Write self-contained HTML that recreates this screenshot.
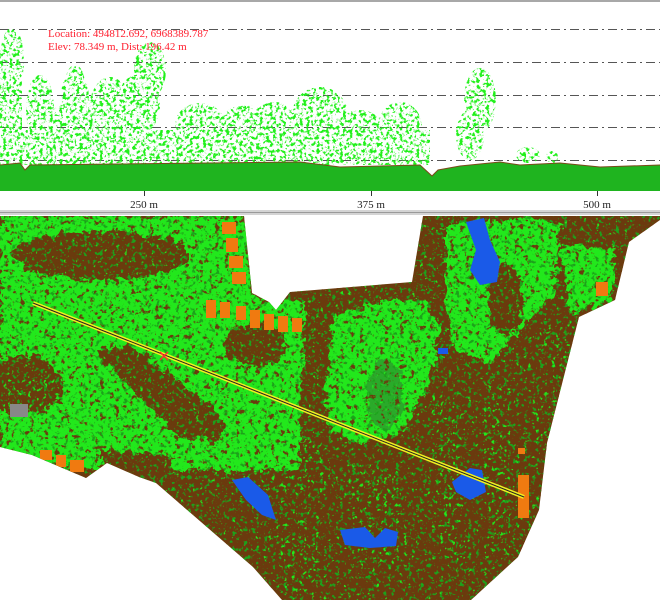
<!DOCTYPE html>
<html><head><meta charset="utf-8"><style>
html,body{margin:0;padding:0;background:#fff;}
svg{display:block;}
text{font-family:"Liberation Serif",serif;}
</style></head><body>
<svg width="660" height="600" viewBox="0 0 660 600" xmlns="http://www.w3.org/2000/svg">
<defs>
<filter id="spk" x="-10%" y="-10%" width="120%" height="120%">
<feTurbulence type="fractalNoise" baseFrequency="0.3" numOctaves="3" seed="4" result="n"/>
<feColorMatrix in="n" type="matrix" values="0 0 0 0 0 0 0 0 0 0 0 0 0 0 0 9 0 0 0 -4.6" result="m"/>
<feComposite in="SourceGraphic" in2="m" operator="in"/>
</filter>
<filter id="spk2" x="-10%" y="-10%" width="120%" height="120%">
<feTurbulence type="fractalNoise" baseFrequency="0.25" numOctaves="3" seed="9" result="n"/>
<feColorMatrix in="n" type="matrix" values="0 0 0 0 0 0 0 0 0 0 0 0 0 0 0 10 0 0 0 -6.3" result="m"/>
<feComposite in="SourceGraphic" in2="m" operator="in"/>
</filter>
<filter id="spk2b" x="-10%" y="-10%" width="120%" height="120%">
<feTurbulence type="fractalNoise" baseFrequency="0.25" numOctaves="3" seed="9" result="n"/>
<feColorMatrix in="n" type="matrix" values="0 0 0 0 0 0 0 0 0 0 0 0 0 0 0 10 0 0 0 -6.9" result="m"/>
<feComposite in="SourceGraphic" in2="m" operator="in"/>
</filter>
<filter id="spk3" x="-10%" y="-10%" width="120%" height="120%">
<feTurbulence type="fractalNoise" baseFrequency="0.2" numOctaves="3" seed="13" result="n"/>
<feColorMatrix in="n" type="matrix" values="0 0 0 0 0 0 0 0 0 0 0 0 0 0 0 10 0 0 0 -6.0" result="m"/>
<feComposite in="SourceGraphic" in2="m" operator="in"/>
</filter>
<filter id="spk4" x="-10%" y="-10%" width="120%" height="120%">
<feTurbulence type="fractalNoise" baseFrequency="0.25" numOctaves="3" seed="21" result="n"/>
<feColorMatrix in="n" type="matrix" values="0 0 0 0 0 0 0 0 0 0 0 0 0 0 0 10 0 0 0 -5.8" result="m"/>
<feComposite in="SourceGraphic" in2="m" operator="in"/>
</filter>
<filter id="rough" x="-10%" y="-10%" width="120%" height="120%">
<feTurbulence type="fractalNoise" baseFrequency="0.12" numOctaves="3" seed="2" result="t"/>
<feDisplacementMap in="SourceGraphic" in2="t" scale="14" xChannelSelector="R" yChannelSelector="G"/>
</filter>
<clipPath id="mapclip"><polygon points="0,216 244,216 252,293 269,302 276,310 290,292 412,282 423,216 660,216 660,220 629,242 615,300 579,317 547,443 539,510 518,557 471,600 282,600 253,567 156,483 139,477 107,463 86,478 32,455 0,447"/></clipPath>
<clipPath id="topclip"><rect x="0" y="2" width="660" height="163"/></clipPath>
</defs>

<rect x="0" y="0" width="660" height="2" fill="#a8a8a8"/>
<g stroke="#555" stroke-width="1" stroke-dasharray="9,4,2,4">
<line x1="0" y1="29.5" x2="660" y2="29.5"/>
<line x1="0" y1="62.5" x2="660" y2="62.5"/>
<line x1="0" y1="95.5" x2="660" y2="95.5"/>
<line x1="0" y1="127.5" x2="660" y2="127.5"/>
<line x1="0" y1="160.5" x2="660" y2="160.5"/>
</g>
<g clip-path="url(#topclip)">
<g fill="#22f01a" filter="url(#spk)">
<ellipse cx="12" cy="60" rx="12" ry="32"/>
<rect x="0" y="60" width="22" height="105"/>
<ellipse cx="40" cy="110" rx="14" ry="35"/>
<ellipse cx="75" cy="95" rx="14" ry="22"/>
<ellipse cx="70" cy="130" rx="22" ry="30"/>
<ellipse cx="110" cy="115" rx="22" ry="38"/>
<ellipse cx="150" cy="70" rx="16" ry="28"/>
<ellipse cx="138" cy="105" rx="22" ry="30"/>
<ellipse cx="75" cy="85" rx="10" ry="20"/>
<ellipse cx="200" cy="125" rx="25" ry="22"/>
<ellipse cx="245" cy="125" rx="25" ry="20"/>
<ellipse cx="275" cy="120" rx="22" ry="18"/>
<ellipse cx="320" cy="115" rx="28" ry="28"/>
<ellipse cx="360" cy="128" rx="22" ry="18"/>
<ellipse cx="400" cy="127" rx="22" ry="25"/>
<ellipse cx="480" cy="100" rx="16" ry="32"/>
<ellipse cx="470" cy="135" rx="14" ry="25"/>
<ellipse cx="528" cy="155" rx="12" ry="8"/>
<ellipse cx="552" cy="157" rx="6" ry="6"/>
<rect x="0" y="130" width="430" height="35"/>
</g>
</g>
<polygon points="0,165 20,163 25,170 30,165 300,162 340,167 420,165 432,176 438,170 460,166 500,162 520,165 560,163 600,167 660,165 660,191 0,191" fill="#1fb41f"/>
<polyline points="0,165 20,163 25,170 30,165 300,162 340,167 420,165 432,176 438,170 460,166 500,162 520,165 560,163 600,167 660,165" fill="none" stroke="#7a4a1a" stroke-width="1"/>
<text x="48" y="37" font-size="11" fill="#ff2030">Location: 494812.692, 6968389.787</text>
<text x="48" y="50" font-size="11" fill="#ff2030">Elev: 78.349 m, Dist: 196.42 m</text>
<g stroke="#333" stroke-width="1">
<line x1="144.5" y1="191" x2="144.5" y2="196"/>
<line x1="371.5" y1="191" x2="371.5" y2="196"/>
<line x1="597.5" y1="191" x2="597.5" y2="196"/>
</g>
<g font-size="11" fill="#222" text-anchor="middle">
<text x="144" y="208">250 m</text>
<text x="371" y="208">375 m</text>
<text x="597" y="208">500 m</text>
</g>
<rect x="0" y="210" width="660" height="5" fill="#d4d4d4"/>
<rect x="0" y="212" width="660" height="1" fill="#9a9a9a"/>

<g clip-path="url(#mapclip)">
<rect x="0" y="215" width="660" height="385" fill="#6b3a0e"/>
<g fill="#24e81c" filter="url(#rough)">
<polygon points="0,216 245,216 252,293 269,302 320,300 330,330 312,440 200,460 100,450 0,445"/>
<polygon points="325,320 380,300 425,300 440,330 430,380 405,430 360,445 330,430 320,380"/>
<polygon points="445,225 520,218 560,222 556,290 520,330 490,362 455,350 445,300"/>
<polygon points="560,243 615,250 612,300 570,315"/>
<polygon points="0,440 100,445 100,470 0,460"/>
<polygon points="170,440 300,440 300,470 170,470"/>
</g>
<g fill="#6b3a0e" filter="url(#rough)">
<ellipse cx="100" cy="255" rx="88" ry="24"/>
<polygon points="95,352 130,345 228,420 218,442 180,437"/>
<ellipse cx="25" cy="385" rx="38" ry="30"/>
<polygon points="305,300 335,300 320,440 300,440"/>
<ellipse cx="505" cy="300" rx="18" ry="35"/>
<ellipse cx="255" cy="345" rx="30" ry="22"/>
</g>
<ellipse cx="385" cy="395" rx="18" ry="35" fill="#2caa2a" filter="url(#rough)"/>
<g fill="#1fa21a" filter="url(#spk4)">
<rect x="0" y="216" width="660" height="384"/>
</g>
<g fill="#6b3a0e" filter="url(#spk3)">
<rect x="0" y="216" width="660" height="384"/>
</g>
<g fill="#26e61c" filter="url(#spk2b)">
<rect x="0" y="216" width="660" height="384"/>
</g>
<g fill="#24e81c" filter="url(#spk2)">
<polygon points="345,465 400,470 410,560 360,570"/>
<polygon points="265,520 320,520 320,595 285,595"/>
<polygon points="430,390 460,395 462,560 435,560"/>
<polygon points="482,380 510,380 510,560 485,560"/>
<polygon points="150,440 320,445 330,500 200,480"/>
<polygon points="540,330 580,320 560,440 530,440"/>
<polygon points="0,380 80,380 80,450 0,445"/>
</g>
<g fill="#f07a10">
<rect x="222" y="222" width="14" height="12"/>
<rect x="226" y="238" width="12" height="14"/>
<rect x="229" y="256" width="14" height="12"/>
<rect x="232" y="272" width="14" height="12"/>
<rect x="206" y="300" width="10" height="18"/>
<rect x="220" y="302" width="10" height="16"/>
<rect x="236" y="306" width="10" height="14"/>
<rect x="250" y="310" width="10" height="18"/>
<rect x="264" y="314" width="10" height="16"/>
<rect x="278" y="316" width="10" height="16"/>
<rect x="292" y="318" width="10" height="14"/>
<rect x="294" y="270" width="10" height="10"/>
<rect x="40" y="450" width="12" height="10"/>
<rect x="56" y="455" width="10" height="12"/>
<rect x="70" y="460" width="14" height="12"/>
<rect x="596" y="282" width="12" height="14"/>
<rect x="518" y="475" width="11" height="43"/>
<rect x="518" y="448" width="7" height="6"/>
</g>
<g fill="#1a5ae8">
<path d="M466,222 L484,218 L490,240 L500,262 L497,282 L480,285 L470,270 L476,250 Z"/>
<path d="M232,480 L248,477 L268,495 L276,520 L262,515 L246,500 Z"/>
<path d="M340,530 L365,527 L375,538 L385,528 L398,532 L396,546 L370,548 L345,545 Z"/>
<path d="M452,482 L470,468 L482,470 L486,492 L470,500 L456,492 Z"/>
<rect x="438" y="348" width="10" height="6"/>
</g>
<rect x="10" y="404" width="18" height="13" fill="#888"/>
</g>
<line x1="33" y1="303" x2="524" y2="497" stroke="#f0f020" stroke-width="4"/>
<line x1="33" y1="303" x2="524" y2="497" stroke="#222" stroke-width="1"/>
<g stroke="#ff3030" stroke-width="1.5">
<line x1="160" y1="352" x2="168" y2="360"/>
<line x1="168" y1="352" x2="160" y2="360"/>
</g>
</svg>
</body></html>
